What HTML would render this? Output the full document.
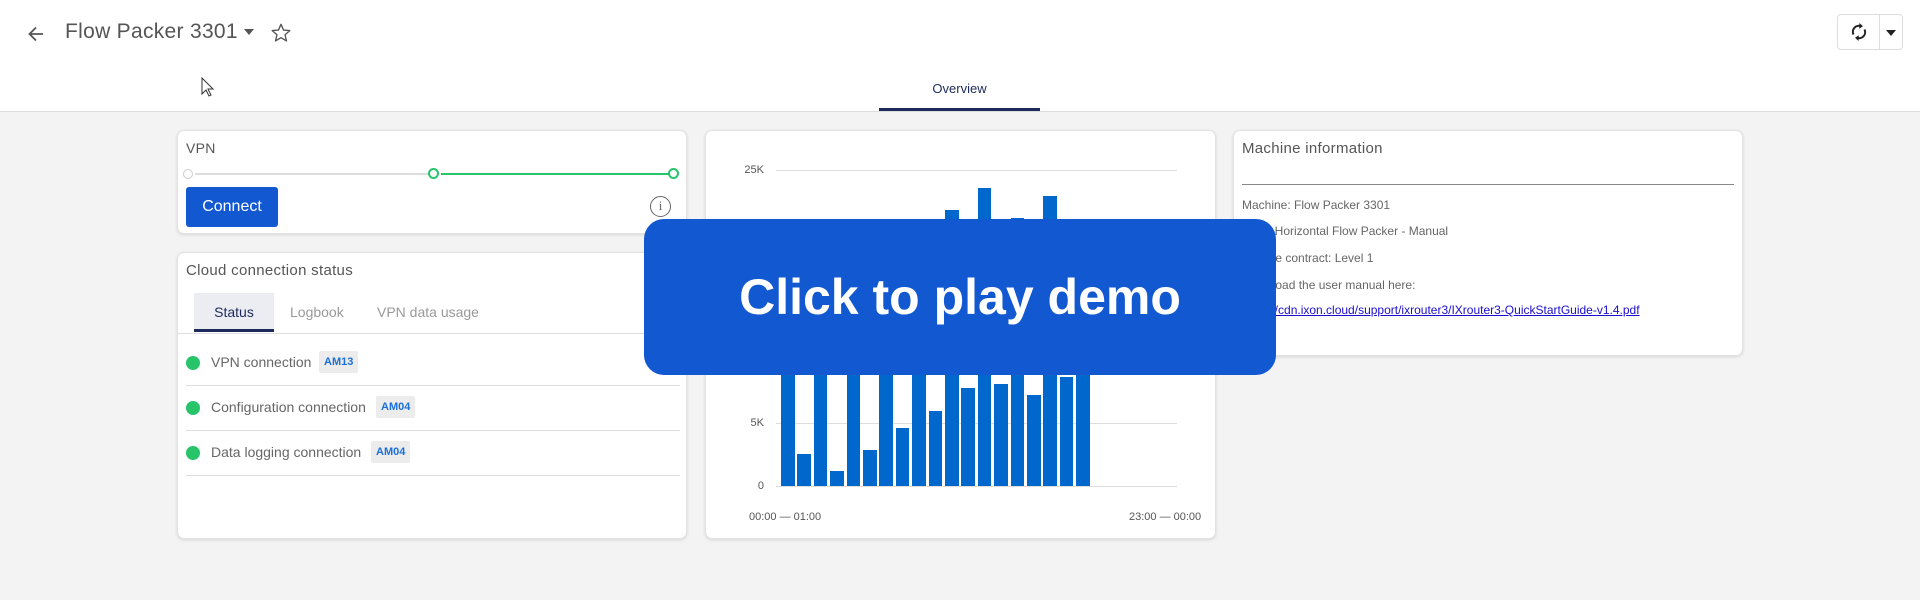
<!DOCTYPE html>
<html><head><meta charset="utf-8"><style>
*{box-sizing:border-box;margin:0;padding:0}
body{width:1920px;height:600px;overflow:hidden;background:#f3f3f3;font-family:"Liberation Sans",sans-serif;position:relative;color:#555}
.abs{position:absolute}
.hdr{left:0;top:0;width:1920px;height:112px;background:#fff;border-bottom:1px solid #dcdcdc}
.card{background:#fff;border:1px solid #e2e2e2;border-radius:7px;box-shadow:0 1px 3px rgba(0,0,0,.12)}
.t{font-size:15px;color:#555;letter-spacing:.3px}
.row{left:8px;width:494px;height:45px;border-bottom:1px solid #ddd}
.dot{position:absolute;left:0;top:15px;width:14px;height:14px;border-radius:50%;background:#27c46a}
.rt{position:absolute;left:25px;top:13px;font-size:14px;color:#666}
.chip{position:absolute;top:10px;height:22px;background:#ececec;border-radius:2px;color:#1a6fd8;font-size:11px;font-weight:bold;padding:5px 5px}
.gl{left:70px;width:401px;height:1px;background:#ddd}
.yl{font-size:11px;color:#555;width:30px;text-align:right}
.bar{position:absolute;width:13.5px;background:#0068cc;bottom:0}
.mi{left:7px;font-size:12px;color:#666}
</style></head><body>
<div class="abs hdr">
<svg class="abs" style="left:26px;top:24px" width="20" height="20" viewBox="0 0 20 20"><path d="M17 10H4M10 3.5L3.5 10 10 16.5" fill="none" stroke="#555" stroke-width="1.8"/></svg>
<div class="abs" style="left:65px;top:20px;font-size:21px;color:#555;letter-spacing:.3px">Flow Packer 3301</div>
<svg class="abs" style="left:244px;top:29px" width="10" height="6"><path d="M0 0h10L5 6z" fill="#555"/></svg>
<svg class="abs" style="left:270px;top:22px" width="22" height="22" viewBox="0 0 24 24"><path d="M12 2.5l2.8 6.3 6.8.6-5.2 4.5 1.6 6.7L12 17.1l-6 3.5 1.6-6.7-5.2-4.5 6.8-.6z" fill="none" stroke="#555" stroke-width="1.5" stroke-linejoin="round"/></svg>
<svg class="abs" style="left:201px;top:77px" width="14" height="20" viewBox="0 0 14 20"><path d="M1 1v16l4-4 3 6 2-1-3-6h5z" fill="#fff" stroke="#333" stroke-width="1"/></svg>
<div class="abs" style="left:879px;top:81px;width:161px;text-align:center;font-size:13px;color:#1c2a5a">Overview</div>
<div class="abs" style="left:879px;top:108px;width:161px;height:3px;background:#1c2a5a"></div>
<div class="abs" style="left:1837px;top:14px;width:66px;height:36px;border:1px solid #ddd;border-radius:4px"></div>
<div class="abs" style="left:1879px;top:14px;width:1px;height:36px;background:#ddd"></div>
<svg class="abs" style="left:1847px;top:20px" width="24" height="24" viewBox="0 0 24 24"><path d="M6.5 14.5A6 6 0 0 1 14 6.2M17.5 9.5A6 6 0 0 1 10 17.8" fill="none" stroke="#222" stroke-width="2"/><path d="M12.5 3l3.5 3.3-3.8 2.5zM11.5 21l-3.5-3.3 3.8-2.5z" fill="#222"/></svg>
<svg class="abs" style="left:1886px;top:30px" width="10" height="6"><path d="M0 0h10L5 6z" fill="#222"/></svg>
</div>

<div class="abs card" style="left:177px;top:130px;width:510px;height:104px">
<div class="abs t" style="left:8px;top:9px;font-size:14px">VPN</div>
<div class="abs" style="left:5px;top:38px;width:10px;height:10px;border:1.5px solid #ccc;border-radius:50%"></div>
<div class="abs" style="left:17px;top:42px;width:235px;height:2px;background:#ddd"></div>
<div class="abs" style="left:250px;top:37px;width:11px;height:11px;border:2px solid #27c46a;border-radius:50%"></div>
<div class="abs" style="left:263px;top:42px;width:229px;height:2px;background:#27c46a"></div>
<div class="abs" style="left:490px;top:37px;width:11px;height:11px;border:2px solid #27c46a;border-radius:50%"></div>
<div class="abs" style="left:8px;top:56px;width:92px;height:40px;background:#1259d1;border-radius:3px;color:#fff;font-size:16px;text-align:center;line-height:40px">Connect</div>
<div class="abs" style="left:472px;top:65px;width:21px;height:21px;border:1.5px solid #666;border-radius:50%;font-size:13px;color:#666;text-align:center;line-height:18px;font-family:'Liberation Serif',serif">i</div>
</div>

<div class="abs card" style="left:177px;top:252px;width:510px;height:287px">
<div class="abs t" style="left:8px;top:9px">Cloud connection status</div>
<div class="abs" style="left:16px;top:40px;width:80px;height:39px;background:#ebedf2;border-bottom:3px solid #1c2a5a;color:#1c2a5a;font-size:14px;text-align:center;line-height:38px">Status</div>
<div class="abs" style="left:112px;top:51px;font-size:14px;color:#999">Logbook</div>
<div class="abs" style="left:199px;top:51px;font-size:14px;color:#999">VPN data usage</div>
<div class="abs" style="left:0;top:80px;width:508px;height:1px;background:#ddd"></div>
<div class="abs row" style="top:88px"><div class="dot"></div><div class="rt">VPN connection</div><div class="chip" style="left:133px">AM13</div></div>
<div class="abs row" style="top:133px"><div class="dot"></div><div class="rt">Configuration connection</div><div class="chip" style="left:190px">AM04</div></div>
<div class="abs row" style="top:178px"><div class="dot"></div><div class="rt">Data logging connection</div><div class="chip" style="left:185px">AM04</div></div>
</div>

<div class="abs card" style="left:705px;top:130px;width:511px;height:409px">
<div class="abs yl" style="left:28px;top:33px">25K</div>
<div class="abs gl" style="top:39px"></div>
<div class="abs yl" style="left:28px;top:286px">5K</div>
<div class="abs gl" style="top:292px"></div>
<div class="abs yl" style="left:28px;top:349px">0</div>
<div class="abs gl" style="top:355px"></div>
<div class="abs" style="left:75px;top:40px;width:320px;height:315px">
<div class="bar" style="left:0;height:230px"></div>
<div class="bar" style="left:16.4px;height:32px"></div>
<div class="bar" style="left:32.8px;height:230px"></div>
<div class="bar" style="left:49.2px;height:15px"></div>
<div class="bar" style="left:65.6px;height:230px"></div>
<div class="bar" style="left:82px;height:36px"></div>
<div class="bar" style="left:98.4px;height:230px"></div>
<div class="bar" style="left:114.8px;height:58px"></div>
<div class="bar" style="left:131.2px;height:230px"></div>
<div class="bar" style="left:147.6px;height:75px"></div>
<div class="bar" style="left:164px;height:276px"></div>
<div class="bar" style="left:180.4px;height:98px"></div>
<div class="bar" style="left:196.8px;height:298px"></div>
<div class="bar" style="left:213.2px;height:102px"></div>
<div class="bar" style="left:229.6px;height:268px"></div>
<div class="bar" style="left:246px;height:91px"></div>
<div class="bar" style="left:262.4px;height:290px"></div>
<div class="bar" style="left:278.8px;height:109px"></div>
<div class="bar" style="left:295.2px;height:230px"></div>
</div>
<div class="abs" style="left:43px;top:380px;font-size:11px;color:#555">00:00 — 01:00</div>
<div class="abs" style="left:423px;top:380px;font-size:11px;color:#555">23:00 — 00:00</div>
</div>

<div class="abs card" style="left:1233px;top:130px;width:510px;height:226px">
<div class="abs t" style="left:8px;top:9px">Machine information</div>
<div class="abs" style="left:8px;top:53px;width:492px;height:1px;background:#888"></div>
<div class="abs mi" style="left:8px;top:67px">Machine: Flow Packer 3301</div>
<div class="abs mi" style="left:8px;top:93px">Type: Horizontal Flow Packer - Manual</div>
<div class="abs mi" style="left:8px;top:120px">Service contract: Level 1</div>
<div class="abs mi" style="left:8px;top:147px">Download the user manual here:</div>
<div class="abs mi" style="left:8px;top:172px;color:#1a0dcc;text-decoration:underline">https://cdn.ixon.cloud/support/ixrouter3/IXrouter3-QuickStartGuide-v1.4.pdf</div>
</div>

<div class="abs" style="left:644px;top:219px;width:632px;height:156px;background:#1259d1;border-radius:20px;color:#fff;font-weight:bold;font-size:50px;text-align:center;line-height:156px">Click to play demo</div>
</body></html>
